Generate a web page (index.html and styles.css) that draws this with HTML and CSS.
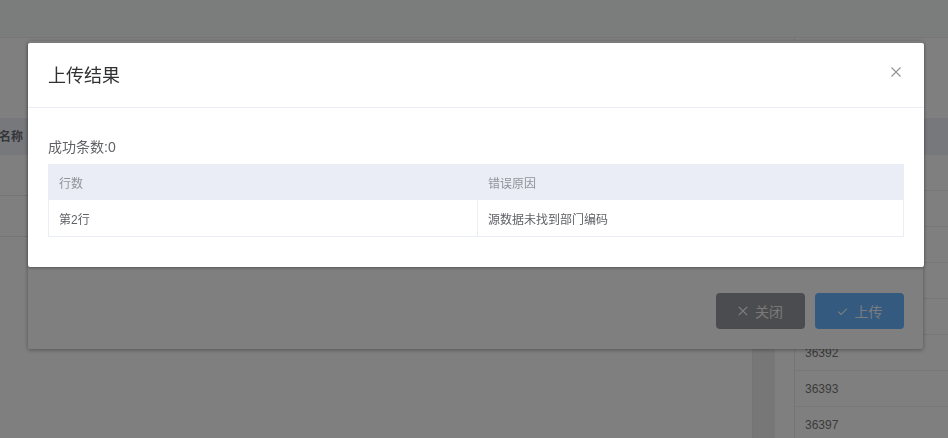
FILE: index.html
```html
<!DOCTYPE html>
<html lang="zh-CN">
<head>
<meta charset="utf-8">
<title>上传结果</title>
<link rel="stylesheet" href="styles.css">
</head>
<body>
<div class="page">
  <div class="topbar"></div>
  <div class="content">
    <div class="left-table">
      <div class="lt-head"><span class="lt-title">名称</span></div>
      <div class="lt-row"></div>
      <div class="lt-row"></div>
    </div>
    <div class="scrollbar"></div>
    <div class="gap"></div>
    <div class="right-table">
      <div class="rt-head"></div>
      <div class="rt-row">36387</div>
      <div class="rt-row">36388</div>
      <div class="rt-row">36389</div>
      <div class="rt-row">36390</div>
      <div class="rt-row">36391</div>
      <div class="rt-row">36392</div>
      <div class="rt-row">36393</div>
      <div class="rt-row">36397</div>
    </div>
  </div>
</div>

<div class="under-dialog">
  <div class="under-body"></div>
  <div class="under-footer">
    <button class="btn btn-close"><svg class="btn-icon" viewBox="0 0 10 10" width="10" height="10"><path d="M0.8 0.8 L9.2 9.2 M9.2 0.8 L0.8 9.2" fill="none" stroke="#fff" stroke-width="1.2"/></svg>关闭</button>
    <button class="btn btn-upload"><svg class="btn-icon" viewBox="0 0 12 12" width="11" height="11"><path d="M1.2 6.2 L4.5 9.3 L10.8 2.8" fill="none" stroke="#fff" stroke-width="1.2"/></svg>上传</button>
  </div>
</div>

<div class="mask"></div>

<div class="dialog">
  <div class="dialog-header">
    <span class="dialog-title">上传结果</span>
    <svg class="dialog-close" viewBox="0 0 10 10" width="10" height="10"><path d="M0.5 0.5 L9.5 9.5 M9.5 0.5 L0.5 9.5" stroke="#909399" stroke-width="1.1" fill="none"/></svg>
  </div>
  <div class="dialog-body">
    <div class="summary">成功条数:0</div>
    <div class="result-table">
      <div class="rt-grid head">
        <div class="cell">行数</div>
        <div class="cell">错误原因</div>
      </div>
      <div class="rt-grid">
        <div class="cell">第2行</div>
        <div class="cell">源数据未找到部门编码</div>
      </div>
    </div>
  </div>
</div>
</body>
</html>
```
FILE: styles.css
```css
* { box-sizing: border-box; }
html, body { margin: 0; padding: 0; }
body {
  width: 948px;
  height: 438px;
  overflow: hidden;
  background: #ffffff;
  font-family: "Liberation Sans", "Noto Sans CJK SC", sans-serif;
  position: relative;
}
.page { width: 948px; height: 438px; }
.topbar { height: 38px; background: #f7f8f9; border-bottom: 1px solid #eeeeee; }
.content { display: flex; height: 400px; }
.left-table { width: 752px; padding-top: 80px; }
.lt-head {
  height: 37px;
  background: #eef0f7;
  display: flex;
  align-items: center;
  font-size: 12px;
  font-weight: bold;
  color: #6a6c70;
}
.lt-title { margin-left: -1px; margin-top: -2px; }
.lt-row { height: 41px; border-bottom: 1px solid #e8eaee; }
.scrollbar { width: 23px; background: #efefef; margin-top: 3px; border-left: 1px solid #e9e9e9; }
.gap { width: 19px; }
.right-table { flex: 1; padding-top: 80px; border-left: 1px solid #e8eaee; }
.rt-head { height: 37px; background: #eef0f7; }
.rt-row {
  height: 36px;
  border-bottom: 1px solid #eceef2;
  font-size: 12px;
  color: #777777;
  padding-left: 10px;
  display: flex;
  align-items: center;
  padding-top: 1px;
}

.under-dialog {
  position: absolute;
  left: 28px;
  top: 41px;
  width: 895px;
  height: 308px;
  background: #fff;
  border-radius: 2px;
  box-shadow: 0 1px 4px rgba(0, 0, 0, 0.35);
  display: flex;
  flex-direction: column;
}
.under-body { flex: 1; }
.under-footer {
  display: flex;
  justify-content: flex-end;
  gap: 10px;
  padding: 0 19px 20px 0;
}
.btn {
  width: 89px;
  height: 36px;
  border: none;
  border-radius: 4px;
  color: #fff;
  font-family: "Liberation Sans", "Noto Sans CJK SC", sans-serif;
  font-size: 14px;
  display: flex;
  align-items: center;
  justify-content: center;
  padding: 0;
}
.btn-close { background: #97999e; color: #f2f2f2; }
.btn-upload { background: #68b4fe; color: #f6f9fc; }
.btn-icon { margin-right: 7px; }

.mask {
  position: fixed;
  inset: 0;
  background: rgba(0, 0, 0, 0.5);
}

.dialog {
  position: absolute;
  left: 28px;
  top: 43px;
  width: 896px;
  height: 224px;
  background: #fff;
  border-radius: 2px;
  box-shadow: 0 1px 3px rgba(0, 0, 0, 0.3);
}
.dialog-header {
  height: 65px;
  border-bottom: 1px solid #ebeef5;
  display: flex;
  align-items: center;
  justify-content: space-between;
  padding: 0 23px 0 20px;
}
.dialog-title { font-size: 18px; color: #303133; margin-top: -3px; }
.dialog-close { margin-top: -7px; }
.dialog-body { padding: 29px 20px 30px; }
.summary { font-size: 14px; line-height: 20px; color: #606266; margin-bottom: 7px; }
.result-table { border: 1px solid #ebeef5; border-top: none; }
.rt-grid { display: grid; grid-template-columns: 428px 1fr; height: 36px; }
.rt-grid.head { background: #eaedf5; }
.rt-grid .cell {
  display: flex;
  align-items: center;
  padding-left: 10px;
  font-size: 12px;
  color: #606266;
}
.rt-grid .cell + .cell { border-left: 1px solid #ebeef5; }
.rt-grid.head .cell { color: #909399; border-left-color: transparent; }
```
